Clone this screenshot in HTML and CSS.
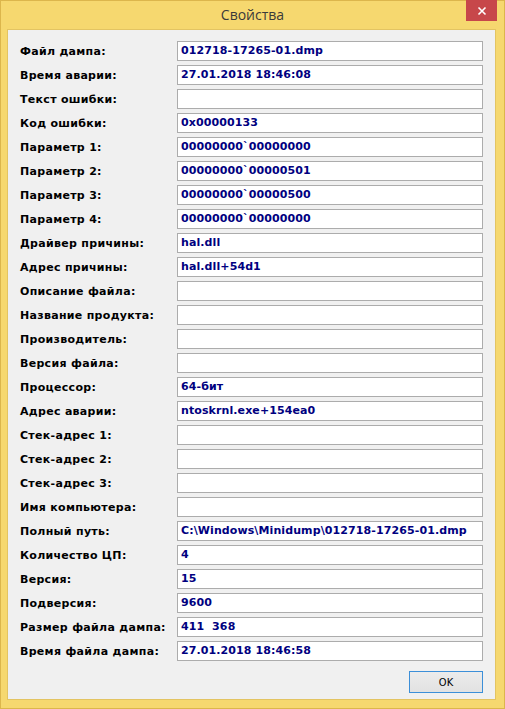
FILE: index.html
```html
<!DOCTYPE html>
<html lang="ru">
<head>
    <meta charset="UTF-8">
    <title>Свойства</title>
    <link rel="stylesheet" href="styles.css">
</head>
<body>
    <div class="window">
        <div class="titlebar">
            <span class="title">Свойства</span>
            <button class="close-btn" aria-label="Закрыть">
                <svg width="10" height="10" viewBox="0 0 10 10"><path d="M1.5 1.5 L8.5 8.5 M8.5 1.5 L1.5 8.5" stroke="#fff" stroke-width="1.6"/></svg>
            </button>
        </div>

        <div class="content">
            <div class="props">
                <label>Файл дампа:</label><div class="field">012718-17265-01.dmp</div>
                <label>Время аварии:</label><div class="field">27.01.2018 18:46:08</div>
                <label>Текст ошибки:</label><div class="field"></div>
                <label>Код ошибки:</label><div class="field">0x00000133</div>
                <label>Параметр 1:</label><div class="field">00000000`00000000</div>
                <label>Параметр 2:</label><div class="field">00000000`00000501</div>
                <label>Параметр 3:</label><div class="field">00000000`00000500</div>
                <label>Параметр 4:</label><div class="field">00000000`00000000</div>
                <label>Драйвер причины:</label><div class="field">hal.dll</div>
                <label>Адрес причины:</label><div class="field">hal.dll+54d1</div>
                <label>Описание файла:</label><div class="field"></div>
                <label>Название продукта:</label><div class="field"></div>
                <label>Производитель:</label><div class="field"></div>
                <label>Версия файла:</label><div class="field"></div>
                <label>Процессор:</label><div class="field">64-бит</div>
                <label>Адрес аварии:</label><div class="field">ntoskrnl.exe+154ea0</div>
                <label>Стек-адрес 1:</label><div class="field"></div>
                <label>Стек-адрес 2:</label><div class="field"></div>
                <label>Стек-адрес 3:</label><div class="field"></div>
                <label>Имя компьютера:</label><div class="field"></div>
                <label>Полный путь:</label><div class="field">C:\Windows\Minidump\012718-17265-01.dmp</div>
                <label>Количество ЦП:</label><div class="field">4</div>
                <label>Версия:</label><div class="field">15</div>
                <label>Подверсия:</label><div class="field">9600</div>
                <label>Размер файла дампа:</label><div class="field">411&nbsp;&nbsp;368</div>
                <label>Время файла дампа:</label><div class="field">27.01.2018 18:46:58</div>
            </div>

            <div class="buttons">
                <button class="btn-ok">OK</button>
            </div>
        </div>
    </div>
</body>
</html>
```

FILE: styles.css
```css
/* Dialog window */
body {
    margin: 0;
    padding: 0;
    background: #ffffff;
}

.window {
    width: 505px;
    height: 709px;
    box-sizing: border-box;
    background: #f6d86f; /* Windows 8 yellow frame */
    border: 1px solid #dcb64c;
    display: flex;
    flex-direction: column;
}

.titlebar {
    height: 30px;
    display: flex;
    align-items: center;
    justify-content: center;
    position: relative;
}

.title {
    font-family: "Open Sans", "Noto Sans", sans-serif;
    font-size: 14px;
    color: #3a3a3a;
    margin-top: -1px;
}

.close-btn {
    position: absolute;
    top: -1px;
    right: 7px;
    width: 31px;
    height: 21px;
    border: none;
    padding: 0;
    background: #c7474a;
    display: flex;
    align-items: center;
    justify-content: center;
}

.content {
    flex: 1;
    margin: 0 8px 8px 6px;
    background: #f0f0f0;
    border: 1px solid #e3c462;
    padding: 11px 12px 6px 12px;
    display: flex;
    flex-direction: column;
}

.props {
    display: grid;
    grid-template-columns: 157px 306px;
    row-gap: 4px;
    align-items: center;
}

.props label {
    font-family: "DejaVu Sans", sans-serif;
    font-weight: bold;
    font-size: 11px;
    letter-spacing: 0.3px;
    color: #000;
}

.field {
    height: 20px;
    box-sizing: border-box;
    background: #fff;
    border: 1px solid #acacac;
    padding: 0 3px;
    font-family: "DejaVu Sans", sans-serif;
    font-weight: bold;
    font-size: 11px;
    letter-spacing: 0.1px;
    line-height: 18px;
    color: #000080;
    white-space: nowrap;
    overflow: hidden;
}

.buttons {
    display: flex;
    justify-content: flex-end;
    margin-top: 10px;
}

.btn-ok {
    width: 74px;
    height: 22px;
    border: 1px solid #3c8fd8;
    background: linear-gradient(#ececec, #e2e2e2);
    font-family: "DejaVu Sans Condensed", "DejaVu Sans", sans-serif;
    font-size: 11px;
    color: #000;
    padding: 0;
}
```
